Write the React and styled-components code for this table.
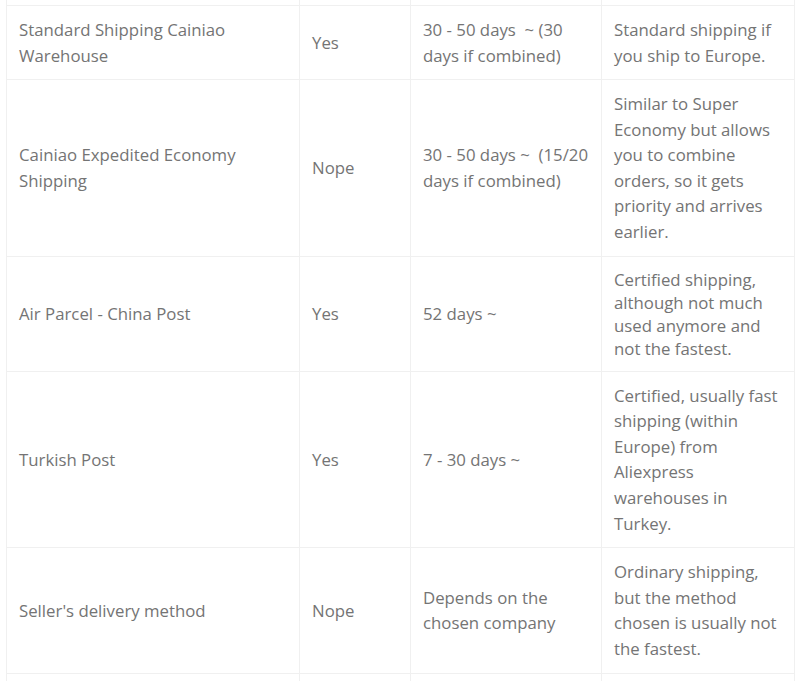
import styled, { createGlobalStyle } from 'styled-components';

const GlobalStyle = createGlobalStyle`
  html, body {
    margin: 0;
    padding: 0;
    background: #fff;
  }
  body {
    font-family: "Open Sans", "Noto Sans", sans-serif;
  }
`;

const Page = styled.div`
  width: 800px;
  height: 681px;
  overflow: hidden;
  padding: 0 0 0 6px;
  box-sizing: border-box;
`;

const Table = styled.table`
  width: 788px;
  table-layout: fixed;
  border-collapse: collapse;
  font-size: 16.8px;
  color: #747474;
`;

const Cell = styled.td`
  border: 1px solid #f0f0f0;
  padding: 11px 10px 11px 12px;
  vertical-align: middle;
  line-height: ${props => props.$lh || '25.6px'};
  word-wrap: break-word;
`;

const EdgeCell = styled.td`
  border-left: 1px solid #f0f0f0;
  border-right: 1px solid #f0f0f0;
  height: ${props => props.$h}px;
  padding: 0;
`;

const rows = [
  {
    name: 'Standard Shipping Cainiao Warehouse',
    tracking: 'Yes',
    time: '30 - 50 days \u00a0~ (30 days if combined)',
    note: 'Standard shipping if you ship to Europe.',
    lh: '25.5px',
  },
  {
    name: 'Cainiao Expedited Economy Shipping',
    tracking: 'Nope',
    time: '30 - 50 days ~ \u00a0(15/20 days if combined)',
    note: 'Similar to Super Economy but allows you to combine orders, so it gets priority and arrives earlier.',
  },
  {
    name: 'Air Parcel - China Post',
    tracking: 'Yes',
    time: '52 days ~',
    note: 'Certified shipping, although not much used anymore and not the fastest.',
    lh: '23px',
  },
  {
    name: 'Turkish Post',
    tracking: 'Yes',
    time: '7 - 30 days ~',
    note: 'Certified, usually fast shipping (within Europe) from Aliexpress warehouses in Turkey.',
  },
  {
    name: "Seller's delivery method",
    tracking: 'Nope',
    time: 'Depends on the chosen company',
    note: 'Ordinary shipping, but the method chosen is usually not the fastest.',
  },
];

const EdgeRow = ({ h }) => (
  <tr>
    <EdgeCell $h={h} />
    <EdgeCell $h={h} />
    <EdgeCell $h={h} />
    <EdgeCell $h={h} />
  </tr>
);

export default function App() {
  return (
    <Page>
      <GlobalStyle />
      <Table>
        <colgroup>
          <col style={{ width: 293 }} />
          <col style={{ width: 111 }} />
          <col style={{ width: 191 }} />
          <col style={{ width: 193 }} />
        </colgroup>
        <tbody>
          <EdgeRow h={5} />
          {rows.map(row => (
            <tr key={row.name}>
              <Cell $lh={row.lh}>{row.name}</Cell>
              <Cell $lh={row.lh}>{row.tracking}</Cell>
              <Cell $lh={row.lh}>{row.time}</Cell>
              <Cell $lh={row.lh}>{row.note}</Cell>
            </tr>
          ))}
          <EdgeRow h={40} />
        </tbody>
      </Table>
    </Page>
  );
}
